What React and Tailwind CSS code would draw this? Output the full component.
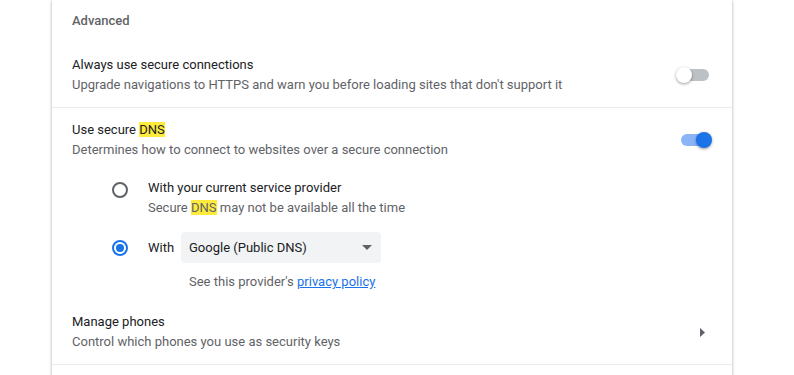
import React from "react";

function Toggle({ on }) {
  return (
    <div className="relative w-[36px] h-[16px] shrink-0">
      <div
        className={
          "absolute left-[5px] top-[2px] w-[28px] h-[12px] rounded-full " +
          (on ? "bg-[#8ab4f8]" : "bg-[#bdc1c6]")
        }
      />
      <div
        className={
          "absolute top-0 w-[16px] h-[16px] rounded-full shadow-[0_1px_3px_rgba(0,0,0,0.4)] " +
          (on ? "left-[20px] bg-[#1a73e8]" : "left-0 bg-white")
        }
      />
    </div>
  );
}

function Hl({ children }) {
  return <span className="bg-[#ffeb3b]">{children}</span>;
}

export default function App() {
  return (
    <div
      className="w-[794px] h-[375px] overflow-hidden bg-white text-[13px] leading-[20px] text-[#202124]"
      style={{ fontFamily: "Roboto, 'Liberation Sans', sans-serif" }}
    >
      <div className="ml-[52px] w-[680px] h-[400px] bg-white shadow-[0_1px_2px_rgba(60,64,67,0.3),0_1px_3px_1px_rgba(60,64,67,0.15)]">
        {/* header */}
        <div className="h-[41px] px-[20px] flex items-center pt-px">
          <span className="font-medium text-[#5f6368]">Advanced</span>
        </div>

        {/* row 1 */}
        <div className="px-[20px] pt-[14px] pb-[12px] flex">
          <div className="flex-1">
            <div>Always use secure connections</div>
            <div className="text-[#5f6368]">
              Upgrade navigations to HTTPS and warn you before loading sites that don't support it
            </div>
          </div>
          <div className="self-center">
            <Toggle on={false} />
          </div>
        </div>
        <div className="h-px bg-[#e8eaed]" />

        {/* row 2 */}
        <div className="px-[20px] pt-[12px]">
          <div className="flex">
            <div className="flex-1">
              <div>
                Use secure <Hl>DNS</Hl>
              </div>
              <div className="text-[#5f6368]">
                Determines how to connect to websites over a secure connection
              </div>
            </div>
            <div className="self-center">
              <Toggle on={true} />
            </div>
          </div>

          <div className="pl-[40px] mt-[18px]">
            {/* radio 1 */}
            <div className="flex">
              <div className="w-[36px] h-[20px] flex items-center shrink-0 pt-[3px]">
                <div className="w-[16px] h-[16px] rounded-full border-2 border-[#5f6368]" />
              </div>
              <div>
                <div>With your current service provider</div>
                <div className="text-[#5f6368]">
                  Secure <Hl>DNS</Hl> may not be available all the time
                </div>
              </div>
            </div>

            {/* radio 2 */}
            <div className="flex items-center mt-[14px] h-[31px]">
              <div className="w-[36px] flex items-center shrink-0">
                <div className="w-[16px] h-[16px] rounded-full border-2 border-[#1a73e8] flex items-center justify-center">
                  <div className="w-[8px] h-[8px] rounded-full bg-[#1a73e8]" />
                </div>
              </div>
              <span className="w-[33px] pt-px">With</span>
              <div className="w-[200px] h-[31px] rounded-[4px] bg-[#f1f3f4] flex items-center pl-[8px] pr-[9px]">
                <span className="flex-1 pt-px">Google (Public DNS)</span>
                <svg width="10" height="5" viewBox="0 0 10 5">
                  <path d="M0 0 L10 0 L5 5 Z" fill="#5f6368" />
                </svg>
              </div>
            </div>

            <div className="mt-[9px] pl-[77px] text-[#5f6368]">
              See this provider's{" "}
              <span className="text-[#1a73e8] underline">privacy policy</span>
            </div>
          </div>
        </div>

        {/* row 3 */}
        <div className="px-[20px] pt-[20px] pb-[12px] flex">
          <div className="flex-1">
            <div>Manage phones</div>
            <div className="text-[#5f6368]">Control which phones you use as security keys</div>
          </div>
          <div className="w-[36px] flex justify-end items-center pr-[7px]">
            <svg width="5" height="9" viewBox="0 0 5 9">
              <path d="M0 0 L5 4.5 L0 9 Z" fill="#5f6368" />
            </svg>
          </div>
        </div>
        <div className="h-px bg-[#e8eaed]" />
      </div>
    </div>
  );
}
